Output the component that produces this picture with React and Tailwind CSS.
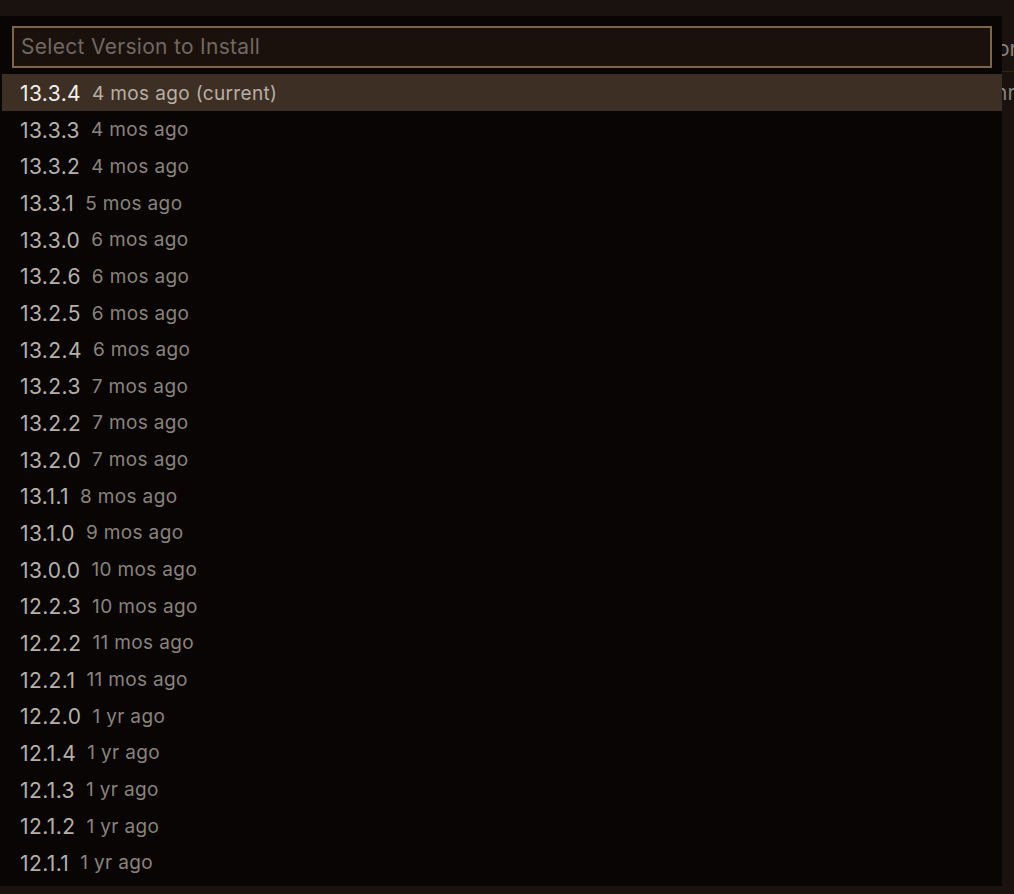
import React from "react";

const versions = [
  ["13.3.4", "4 mos ago (current)"],
  ["13.3.3", "4 mos ago"],
  ["13.3.2", "4 mos ago"],
  ["13.3.1", "5 mos ago"],
  ["13.3.0", "6 mos ago"],
  ["13.2.6", "6 mos ago"],
  ["13.2.5", "6 mos ago"],
  ["13.2.4", "6 mos ago"],
  ["13.2.3", "7 mos ago"],
  ["13.2.2", "7 mos ago"],
  ["13.2.0", "7 mos ago"],
  ["13.1.1", "8 mos ago"],
  ["13.1.0", "9 mos ago"],
  ["13.0.0", "10 mos ago"],
  ["12.2.3", "10 mos ago"],
  ["12.2.2", "11 mos ago"],
  ["12.2.1", "11 mos ago"],
  ["12.2.0", "1 yr ago"],
  ["12.1.4", "1 yr ago"],
  ["12.1.3", "1 yr ago"],
  ["12.1.2", "1 yr ago"],
  ["12.1.1", "1 yr ago"],
];

export default function App() {
  return (
    <div
      className="w-[1014px] h-[894px] bg-[#1a120e] overflow-hidden flex flex-col"
      style={{ fontFamily: "Inter, 'Noto Sans', sans-serif" }}
    >
      <div className="h-[16px] shrink-0" />
      <div className="flex flex-row">
        <div className="w-[1002px] h-[870px] bg-[#080504] flex flex-col shrink-0">
          <div className="pt-[10px] pl-[12px] pr-[10px]">
            <div className="h-[42px] border-2 border-[#7d654b] bg-[#1a110d] flex items-center pl-[7px] text-[21px] text-[#716862] tracking-[0.3px]">
              Select Version to Install
            </div>
          </div>
          <div className="mt-[6px] pl-[2px]">
            {versions.map(([v, t], i) => (
              <div
                key={v}
                className={
                  "h-[36.67px] flex items-center pl-[18px] pt-[3px] gap-[11px] " +
                  (i === 0 ? "bg-[#3d2f24]" : "")
                }
              >
                <span
                  className={
                    "text-[21px] tracking-[0.4px] " +
                    (i === 0 ? "text-[#f2efec]" : "text-[#b6b0aa]")
                  }
                >
                  {v}
                </span>
                <span
                  className={
                    "text-[19px] tracking-[0.35px] " +
                    (i === 0 ? "text-[#b8afa6]" : "text-[#8a837d]")
                  }
                >
                  {t}
                </span>
              </div>
            ))}
          </div>
        </div>
        <div className="w-[12px] overflow-hidden flex flex-col pt-[10px]">
          <div className="h-[45px] flex items-center whitespace-nowrap text-[21px] text-[#8a817a] -ml-[5px]">
            or
          </div>
          <div className="h-[1px] bg-[#2e221a] w-full" />
          <div className="h-[38px] pt-[4px] flex items-center whitespace-nowrap text-[21px] text-[#8a817a] -ml-[7px]">
            nr
          </div>
        </div>
      </div>
    </div>
  );
}
